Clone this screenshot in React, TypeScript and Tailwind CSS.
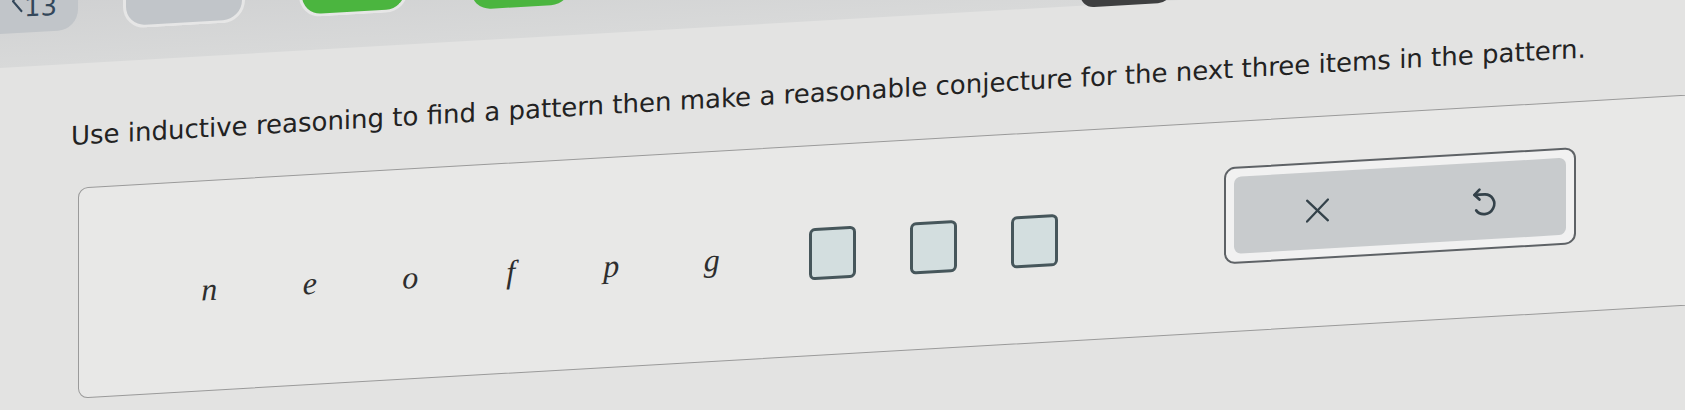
const givenLetters = ['n', 'e', 'o', 'f', 'p', 'g'];

function QuestionTabs() {
    return (
        <nav className="flex h-[68px] items-start bg-linear-to-b from-[#d0d1d2] to-[#d8d9d9]">
            <div className="-ml-[20px] flex h-[34px] w-[98px] items-start overflow-hidden rounded-b-[20px] bg-[#c1c5c9] pl-[32px]">
                <svg viewBox="0 0 12 26" className="-mt-[11px] h-[26px] w-[12px] text-[#33475a]">
                    <polyline points="10,1 1,13 10,24" fill="none" stroke="currentColor" strokeWidth="2" />
                </svg>
                <span className="-mt-[4px] text-[26px] leading-none text-[#33475a]">13</span>
            </div>
            <div className="ml-[45px] flex h-[36px] w-[122px] items-start justify-center overflow-hidden rounded-b-[22px] border-[3px] border-t-0 border-[#e6e6e6] bg-[#c1c5c9] pl-[24px]">
                <span className="-mt-[14px] text-[26px] leading-none text-[#33475a]">14</span>
            </div>
            <div className="ml-[54px] h-[35px] w-[109px] rounded-b-[22px] border-[3px] border-t-0 border-[#e6e6e6] bg-[#4bb53f]" />
            <div className="ml-[63px] h-[37px] w-[100px] rounded-b-[20px] bg-[#4bb53f]" />
            <div className="ml-[509px] h-[70px] w-[92px] rounded-b-[14px] bg-[#3e3f40]" />
        </nav>
    );
}

function AnswerBox() {
    return <div className="h-[52px] w-[47px] rounded-[6px] border-[3px] border-[#46565b] bg-[#d3dedf]" />;
}

function ClearIcon() {
    return (
        <svg viewBox="0 0 24 24" className="h-[25px] w-[25px]" fill="none" stroke="currentColor" strokeWidth="2.2" strokeLinecap="round">
            <path d="M2 2 L22 22" />
            <path d="M22 2 L2 22" />
        </svg>
    );
}

function UndoIcon() {
    return (
        <svg viewBox="0 0 24 24" className="h-[34px] w-[34px]" fill="none" stroke="currentColor" strokeWidth="1.9" strokeLinecap="round" strokeLinejoin="round">
            <path d="M9.5 3.5 L6 7 L9.5 10.5" />
            <path d="M6 7 H13 A7 7 0 1 1 7.2 18" />
        </svg>
    );
}

function Toolbar() {
    return (
        <div className="mt-[45px] ml-[166px] h-[97px] w-[352px] shrink-0 self-start rounded-[11px] border-2 border-[#5e6266] bg-[#f1f1f1] p-[8px]">
            <div className="grid h-full grid-cols-2 items-center justify-items-center rounded-[7px] bg-[#c8cbcd] text-[#34424a]">
                <button type="button" className="flex h-full w-full items-center justify-center">
                    <ClearIcon />
                </button>
                <button type="button" className="flex h-full w-full items-center justify-center">
                    <UndoIcon />
                </button>
            </div>
        </div>
    );
}

export default function App() {
    return (
        <div className="h-[410px] w-full overflow-hidden bg-[#e3e3e2] font-['DejaVu_Sans',sans-serif] text-[#222]">
            <div className="origin-top-left skew-y-[-3.3deg]">
                <QuestionTabs />

                <h1 className="mt-[57px] ml-[71px] text-[26px] leading-[30px] whitespace-nowrap">
                    Use inductive reasoning to find a pattern then make a reasonable conjecture for the next three items in the pattern.
                </h1>

                <div className="mt-[37px] ml-[78px] flex h-[211px] w-[1700px] rounded-[10px] border-[1.5px] border-[#9a9a9a] bg-[#e8e8e7] pl-[80px]">
                    <div className="flex items-center pt-[6px]">
                        {givenLetters.map((letter) => (
                            <span
                                key={letter}
                                className="w-[100.5px] text-center font-['Liberation_Serif',serif] text-[32px] text-[#2e2e2e] italic"
                            >
                                {letter}
                            </span>
                        ))}
                        <div className="ml-[47px] flex gap-[54px]">
                            <AnswerBox />
                            <AnswerBox />
                            <AnswerBox />
                        </div>
                    </div>
                    <Toolbar />
                </div>
            </div>
        </div>
    );
}
